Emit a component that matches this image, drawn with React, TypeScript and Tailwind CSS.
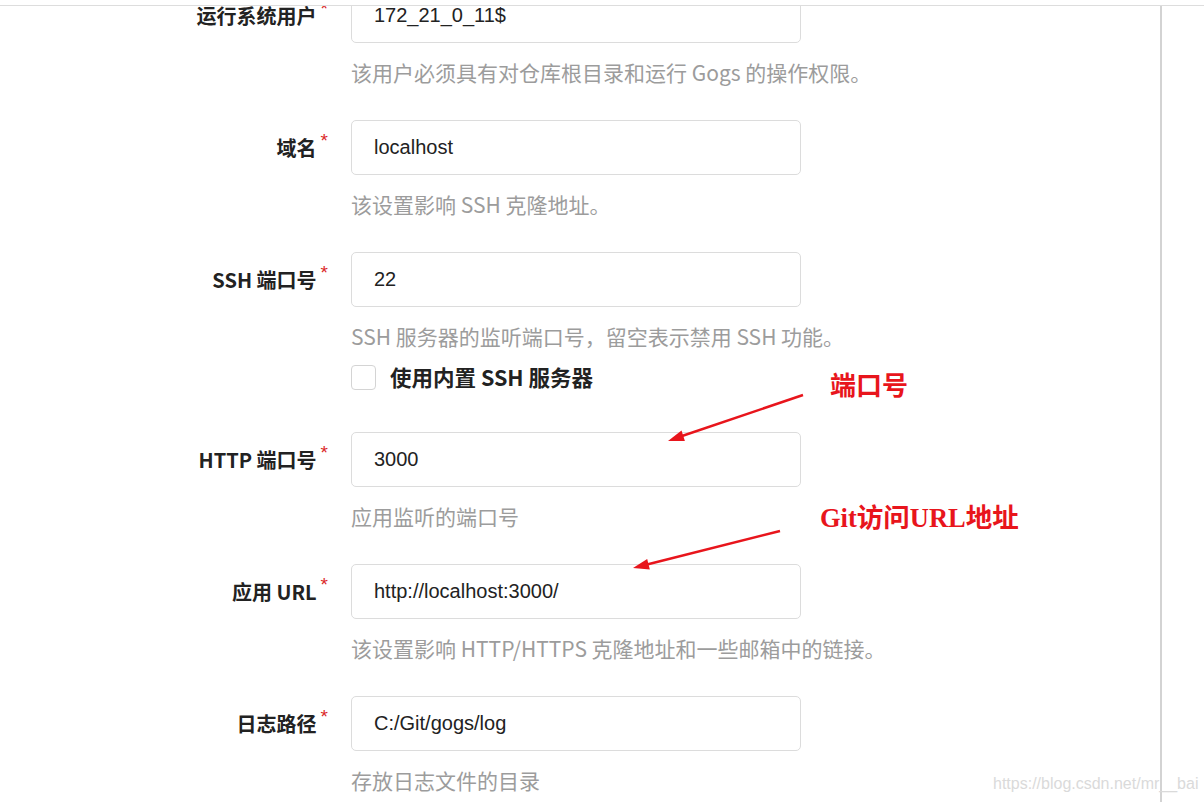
import React from 'react';

const fields = [
  { label: '运行系统用户', value: '172_21_0_11$', help: '该用户必须具有对仓库根目录和运行 Gogs 的操作权限。' },
  { label: '域名', value: 'localhost', help: '该设置影响 SSH 克隆地址。' },
  { label: 'SSH 端口号', value: '22', help: 'SSH 服务器的监听端口号，留空表示禁用 SSH 功能。', checkbox: '使用内置 SSH 服务器' },
  { label: 'HTTP 端口号', value: '3000', help: '应用监听的端口号' },
  { label: '应用 URL', value: 'http://localhost:3000/', help: '该设置影响 HTTP/HTTPS 克隆地址和一些邮箱中的链接。' },
  { label: '日志路径', value: 'C:/Git/gogs/log', help: '存放日志文件的目录' },
];

const cjk = { fontFamily: '"Noto Sans CJK SC", "Liberation Sans", sans-serif' };
const latin = { fontFamily: '"Liberation Sans", "Noto Sans CJK SC", sans-serif' };

const Field = ({ f }: { f: (typeof fields)[number] }) => (
  <div className={f.checkbox ? 'pb-[7px]' : ''}>
    <div className="grid grid-cols-[351px_450px]">
      <div className="flex h-[55px] items-center justify-end pr-[23px]">
        <span className="text-[20px] font-bold text-[#222]" style={cjk}>{f.label}</span>
        <span className="relative -top-[7px] ml-[4px] text-[19px] leading-none text-[#db2828]" style={latin}>*</span>
      </div>
      <input
        readOnly
        defaultValue={f.value}
        className="h-[55px] rounded-[5px] border-[1.5px] border-[#dcdcdc] bg-white px-[22px] text-[20px] text-[#222] outline-none"
        style={latin}
      />
      <div />
      <p className="mt-[15px] whitespace-nowrap text-[21px] leading-[28px] text-[#9c9c9c]" style={cjk}>{f.help}</p>
      {f.checkbox && (
        <>
          <div />
          <label className="mt-[13px] flex h-[28px] items-center gap-[14px]">
            <span className="h-[25px] w-[25px] rounded-[4px] border-[1.5px] border-[#d4d4d4] bg-white" />
            <span className="text-[21.5px] font-bold text-[#222]" style={cjk}>{f.checkbox}</span>
          </label>
        </>
      )}
    </div>
  </div>
);

export default function App() {
  return (
    <div className="relative h-[802px] w-[1204px] overflow-hidden bg-white">
      <div className="mt-[5px] flex h-[797px] border-t border-[#dddddd]">
        <div className="w-[1160px] overflow-hidden">
          <div className="-mt-[18px] flex flex-col gap-[34px]">
            {fields.map((f) => (
              <Field key={f.label} f={f} />
            ))}
          </div>
        </div>
        <div className="w-[2px] bg-[#d3d3d3]" />
        <div className="flex-1" />
      </div>

      {/* red annotations drawn over the screenshot */}
      <div
        className="absolute left-[830px] top-[370px] text-[26px] font-bold leading-[34px] text-[#e8151c]"
        style={{ fontFamily: '"Liberation Serif", "Noto Sans CJK SC", serif' }}
      >
        端口号
      </div>
      <div
        className="absolute left-[820px] top-[501px] text-[26.5px] font-bold leading-[34px] text-[#e8151c]"
        style={{ fontFamily: '"Liberation Serif", "Noto Sans CJK SC", serif' }}
      >
        Git访问URL地址
      </div>
      <svg className="pointer-events-none absolute left-0 top-0" width="1204" height="802">
        <line x1="803" y1="395" x2="682" y2="436" stroke="#e8151c" strokeWidth="2.5" />
        <polygon points="668,441 681.5,430.6 684.9,441" fill="#e8151c" />
        <line x1="780" y1="531" x2="647" y2="564.5" stroke="#e8151c" strokeWidth="2.5" />
        <polygon points="633,568 647.2,559 649.8,569.4" fill="#e8151c" />
      </svg>

      <div className="absolute left-[993px] top-[774px] text-[16px] leading-[20px] text-[#dadada]" style={latin}>
        https://blog.csdn.net/mr__bai
      </div>
    </div>
  );
}
